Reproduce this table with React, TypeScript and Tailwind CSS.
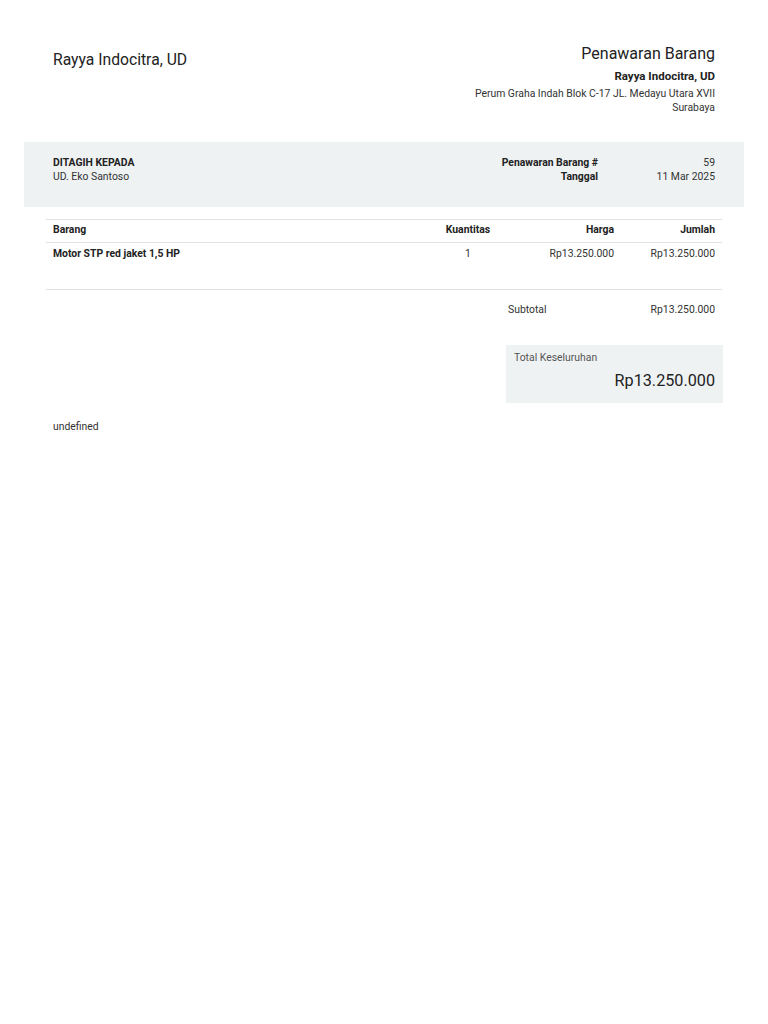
import React from "react";

export default function App() {
  return (
    <div className="w-[768px] min-h-[1024px] bg-white text-[#222] font-['Roboto','Liberation_Sans',sans-serif]">
      <div className="flex justify-between px-[53px] pt-[44px]">
        <div className="text-[15.7px] leading-[20px] mt-[6px]">Rayya Indocitra, UD</div>
        <div className="text-right">
          <div className="text-[16px] leading-[20px]">Penawaran Barang</div>
          <div className="text-[11.5px] font-bold leading-[14px] mt-[5px]">Rayya Indocitra, UD</div>
          <div className="text-[10.4px] leading-[14px] mt-[4px] text-[#333]">Perum Graha Indah Blok C-17 JL. Medayu Utara XVII</div>
          <div className="text-[10.4px] leading-[14px] text-[#333]">Surabaya</div>
        </div>
      </div>

      <div className="mx-[24px] mt-[27px] h-[65px] bg-[#eff2f3] flex justify-between pl-[29px] pr-[29px] pt-[14px]">
        <div>
          <div className="text-[10.4px] font-bold leading-[14px]">DITAGIH KEPADA</div>
          <div className="text-[10.4px] leading-[14px] text-[#333]">UD. Eko Santoso</div>
        </div>
        <div className="flex gap-[10px]">
          <div className="text-right text-[10.4px] font-bold leading-[14px] w-[110px]">
            <div>Penawaran Barang #</div>
            <div>Tanggal</div>
          </div>
          <div className="text-right text-[10.4px] leading-[14px] text-[#333] w-[107px]">
            <div>59</div>
            <div>11 Mar 2025</div>
          </div>
        </div>
      </div>

      <div className="mx-[46px] mt-[12px] w-[676px]">
        <div className="flex items-start h-[24px] pt-[3px] border-t border-b border-[#e3e3e3] text-[10.4px] leading-[14px] font-bold px-[7px]">
          <div className="flex-1">Barang</div>
          <div className="w-[70px] text-center">Kuantitas</div>
          <div className="w-[111px] text-right">Harga</div>
          <div className="w-[101px] text-right">Jumlah</div>
        </div>
        <div className="flex items-start h-[47px] pt-[4px] border-b border-[#e3e3e3] text-[10.4px] leading-[14px] px-[7px]">
          <div className="flex-1 font-bold">Motor STP red jaket 1,5 HP</div>
          <div className="w-[70px] text-center text-[#333]">1</div>
          <div className="w-[111px] text-right text-[#333]">Rp13.250.000</div>
          <div className="w-[101px] text-right text-[#333]">Rp13.250.000</div>
        </div>
      </div>

      <div className="ml-[506px] w-[217px] mt-[13px]">
        <div className="flex justify-between text-[10.4px] leading-[14px] text-[#333] pl-[2px] pr-[8px]">
          <span>Subtotal</span>
          <span>Rp13.250.000</span>
        </div>
        <div className="mt-[28px] h-[58px] bg-[#eff2f3] px-[8px] pt-[6px]">
          <div className="text-[10.4px] leading-[14px] text-[#555]">Total Keseluruhan</div>
          <div className="text-right text-[16.2px] leading-[20px] mt-[6px]">Rp13.250.000</div>
        </div>
      </div>

      <div className="ml-[53px] mt-[17px] text-[10.4px] leading-[14px] text-[#333]">undefined</div>
    </div>
  );
}
